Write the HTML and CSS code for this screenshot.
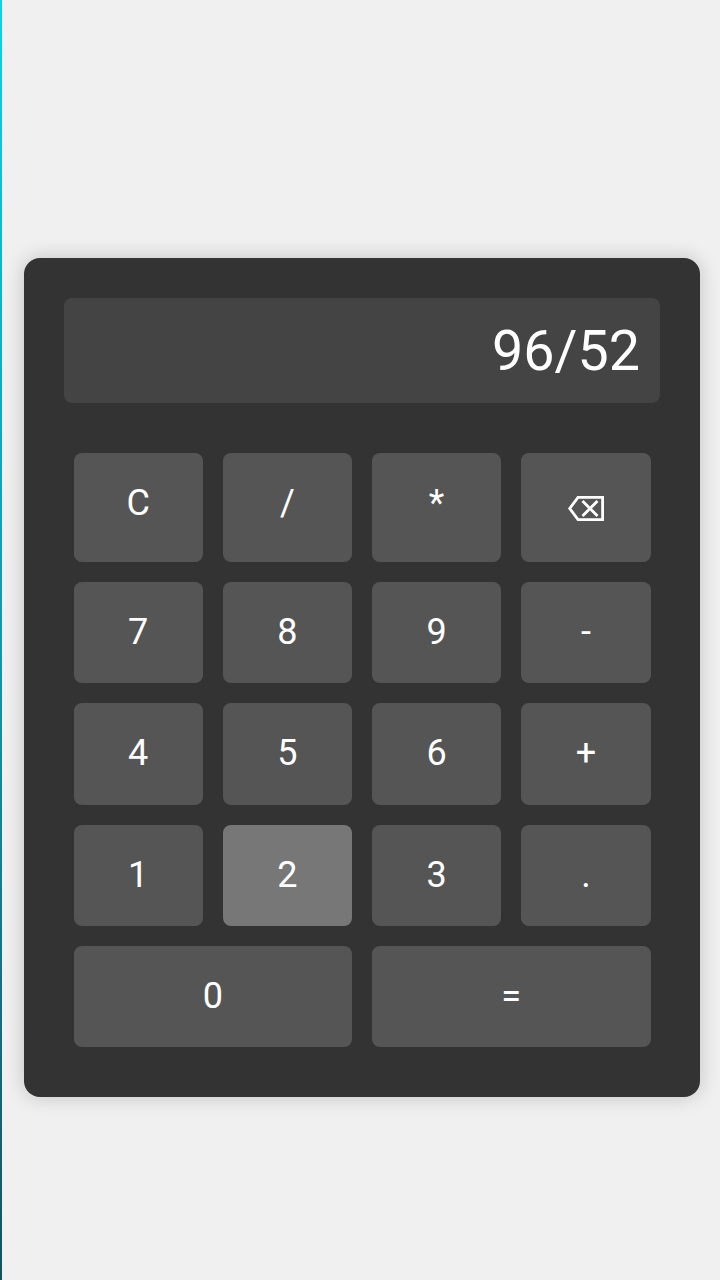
FILE: index.html
```html
<!DOCTYPE html>
<html lang="en">
<head>
    <meta charset="UTF-8">
    <meta name="viewport" content="width=device-width, initial-scale=1.0">
    <title>Calculator</title>
    <link rel="stylesheet" href="styles.css">
</head>
<body>
    <div class="edge"></div>
    <main class="page">
        <div class="calculator">
            <div class="display">96/52</div>
            <div class="buttons">
                <button class="btn tall">C</button>
                <button class="btn tall">/</button>
                <button class="btn tall">*</button>
                <button class="btn tall">
                    <svg class="back-icon" viewBox="0 0 36 25" width="36" height="25" aria-hidden="true">
                        <path d="M10 1.4H34.6V23.6H10L1.7 12.5Z" fill="none" stroke="#fff" stroke-width="2.8"/>
                        <path d="M14.5 5L29.5 20M29.5 5L14.5 20" fill="none" stroke="#fff" stroke-width="2.8"/>
                    </svg>
                </button>
                <button class="btn">7</button>
                <button class="btn">8</button>
                <button class="btn">9</button>
                <button class="btn">-</button>
                <button class="btn">4</button>
                <button class="btn">5</button>
                <button class="btn">6</button>
                <button class="btn">+</button>
                <button class="btn">1</button>
                <button class="btn active">2</button>
                <button class="btn">3</button>
                <button class="btn">.</button>
                <button class="btn wide">0</button>
                <button class="btn wide">=</button>
            </div>
        </div>
    </main>
</body>
</html>
```

FILE: styles.css
```css
* {
    box-sizing: border-box;
}
body {
    margin: 0;
    height: 1280px;
    display: flex;
    background: #f0f0f0;
    font-family: Roboto, sans-serif;
    overflow: hidden;
}
.edge {
    flex: 0 0 2px;
    background: linear-gradient(#00d8f0, #00bcd4 20%, #0a9cb0 50%, #0f7080 80%, #0f5560);
}
.page {
    flex: 1;
    display: flex;
    justify-content: center;
    padding: 258px 20px 0 22px;
    align-items: flex-start;
}
.calculator {
    width: 676px;
    height: 839px;
    padding: 40px;
    background: #333;
    border-radius: 16px;
    box-shadow: 0 0 20px rgba(0, 0, 0, 0.2);
}
.display {
    height: 105px;
    padding: 0 20px;
    margin-bottom: 40px;
    display: flex;
    align-items: center;
    justify-content: flex-end;
    background: #444;
    border-radius: 8px;
    color: #fff;
    font-size: 55.6px;
}
.buttons {
    display: grid;
    grid-template-columns: repeat(4, 1fr);
    grid-template-rows: 109px repeat(4, 101.25px);
    gap: 20px;
    padding: 10px 9.5px;
}
.btn {
    padding: 0 0 1px;
    border: none;
    border-radius: 8px;
    background: #555;
    color: #fff;
    font-family: inherit;
    font-size: 36px;
}
.tall {
    padding-bottom: 9px;
}
.active {
    background: #777;
}
.wide {
    grid-column: span 2;
}
.back-icon {
    display: block;
    margin: 11px auto 0;
}
```
